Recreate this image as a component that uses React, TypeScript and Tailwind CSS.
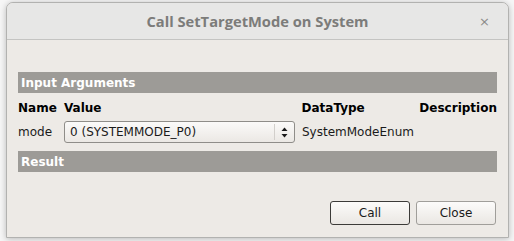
import React from 'react';

const UpDown = () => (
  <svg width="7" height="11" viewBox="0 0 7 11" fill="#1a1a1a">
    <path d="M3.5 0.5 L6.5 4 L0.5 4 Z" />
    <path d="M3.5 10.5 L6.5 7 L0.5 7 Z" />
  </svg>
);

const App: React.FC = () => {
  return (
    <div className="w-[514px] h-[241px] bg-[#f6f6f6] pt-[2px] pl-[6px] overflow-hidden" style={{ fontFamily: '"DejaVu Sans", sans-serif' }}>
      <div className="w-[503px] h-[236px] flex flex-col border border-[#b2b2b0] rounded-t-[7px] bg-[#edeae6] shadow-[0_1px_6px_rgba(0,0,0,0.25)] overflow-hidden">
        {/* Title bar */}
        <div className="h-[37px] shrink-0 flex items-center justify-center relative bg-[#e7e7e6] border-b border-[#c4c4c2]">
          <span className="text-[14.7px] font-bold text-[#7c7c7a]" style={{ fontFamily: '"Open Sans", "Noto Sans", sans-serif' }}>
            Call SetTargetMode on System
          </span>
          <span className="absolute right-[18px] top-[12px] text-[13px] text-[#8c8c8a] leading-none">×</span>
        </div>

        {/* Body */}
        <div className="flex-1 flex flex-col px-[11px] text-[12px] text-[#1a1a1a]">
          <div className="mt-[32px] h-[21px] bg-[#9d9b97] flex items-center pl-[3px] font-bold text-white">Input Arguments</div>

          <div className="mt-[7px] h-[16px] flex items-center font-bold text-black">
            <span className="w-[46px]">Name</span>
            <span className="w-[238px]">Value</span>
            <span className="w-[118px]">DataType</span>
            <span>Description</span>
          </div>

          <div className="mt-[5px] h-[22px] flex items-center">
            <span className="w-[46px]">mode</span>
            <div className="w-[231px] h-[22px] flex items-center rounded-[3px] border border-[#8f8d89] bg-gradient-to-b from-[#fbfaf9] to-[#ebe8e4]">
              <span className="flex-1 pl-[5px]">0 (SYSTEMMODE_P0)</span>
              <div className="h-[16px] w-[20px] border-l border-[#d2cfcb] flex items-center justify-center">
                <UpDown />
              </div>
            </div>
            <span className="ml-[7px]">SystemModeEnum</span>
          </div>

          <div className="mt-[8px] h-[21px] bg-[#9d9b97] flex items-center pl-[3px] font-bold text-white">Result</div>

          <div className="mt-[29px] flex justify-end gap-[6px] pr-[1px]">
            <button className="w-[80px] h-[24px] rounded-[3px] border border-[#3c3b39] bg-gradient-to-b from-[#fcfbfa] to-[#eae7e3] text-[12px] text-[#1a1a1a]">Call</button>
            <button className="w-[80px] h-[24px] rounded-[3px] border border-[#a09e9a] bg-gradient-to-b from-[#fcfbfa] to-[#eae7e3] text-[12px] text-[#1a1a1a]">Close</button>
          </div>
        </div>
      </div>
    </div>
  );
};

export default App;
